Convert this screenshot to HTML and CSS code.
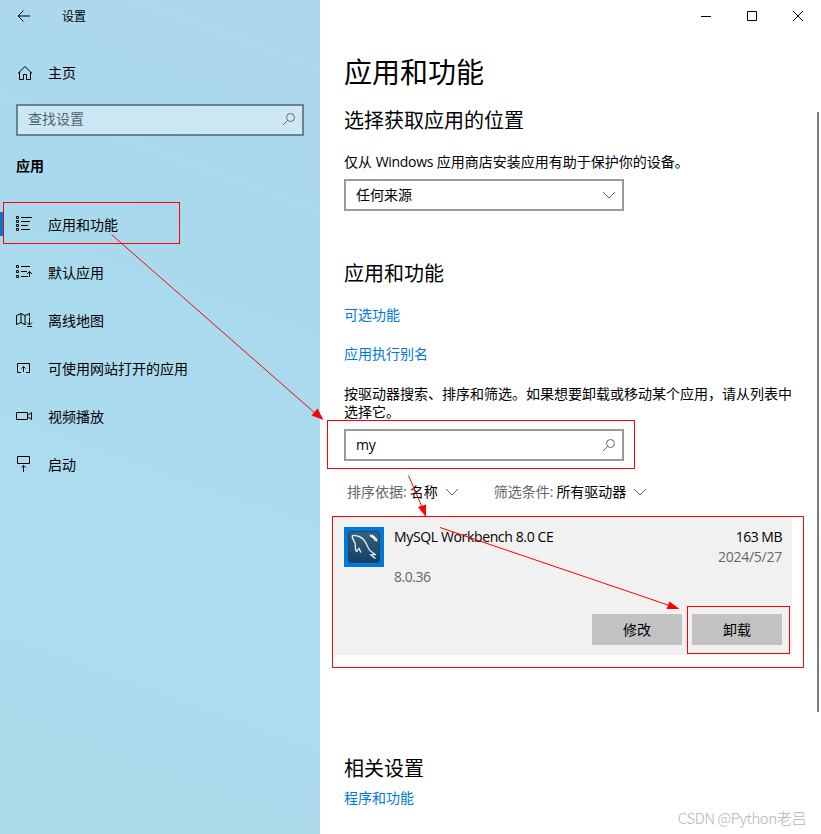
FILE: index.html
```
<!DOCTYPE html>
<html lang="zh-CN">
<head>
  <meta charset="UTF-8">
  <meta name="viewport" content="width=device-width, initial-scale=1.0">
  <title>设置</title>
  <link rel="stylesheet" href="styles.css">
</head>
<body>
  <div class="window">
    <aside class="sidebar">
      <div class="title-row">
        <svg class="back" width="14" height="14" viewBox="0 0 14 14"><path d="M6.500 1.500 1 7l5.500 5.500M1 7h12"/></svg>
        <span>设置</span>
      </div>
      <a class="home">
        <svg width="16" height="16" viewBox="0 0 16 16"><path d="M1 8.300 8 1.500l7 6.800M2.500 7v7.500h4V9.500h3v5h4V7"/></svg>
        <span>主页</span>
      </a>
      <div class="search side-search">
        <span>查找设置</span>
        <svg width="14" height="14" viewBox="0 0 14 14"><circle cx="8.500" cy="5.500" r="4"/><path d="M5.600 8.400 1 13"/></svg>
      </div>
      <div class="group-title">应用</div>
      <nav class="nav">
        <a class="nav-item active">
          <svg width="18" height="18" viewBox="0 0 18 18"><path d="M1.500 1.500h2v2h-2zM1.500 5.500h2v2h-2zM1.500 9.500h2v2h-2zM1.500 13.500h2v2h-2zM6 2.500h11M6 6.500h9M6 10.500h7M6 14.500h9"/></svg>
          <span>应用和功能</span>
        </a>
        <a class="nav-item">
          <svg width="18" height="18" viewBox="0 0 18 18"><path d="M1.500 2.500h2v2h-2zM1.500 7.500h2v2h-2zM1.500 12.500h2v2h-2zM6 3.500h9M6 8.500h6M6 13.500h7M14.500 14V8.500M12 11l2.500-2.500L17 11"/></svg>
          <span>默认应用</span>
        </a>
        <a class="nav-item">
          <svg width="18" height="18" viewBox="0 0 18 18"><path d="M11 13.500 9.500 13.500l-3.500-2-4.500 2v-9l4.500-2 4 2 4.500-2v3M6 2.500v9M10 4.500v9M14.500 6.500v7.500M12 11.500l2.500 2.500L17 11.500M12 15.500h5"/></svg>
          <span>离线地图</span>
        </a>
        <a class="nav-item">
          <svg width="18" height="18" viewBox="0 0 18 18"><path d="M6 13.500H2.500v-9h12v9H11M8.500 13V7.500M6.500 9.500l2-2 2 2"/></svg>
          <span>可使用网站打开的应用</span>
        </a>
        <a class="nav-item">
          <svg width="18" height="18" viewBox="0 0 18 18"><path d="M1.500 5.500h11v7h-11zM13 8l3.500-2.500v7L13 10"/></svg>
          <span>视频播放</span>
        </a>
        <a class="nav-item">
          <svg width="18" height="18" viewBox="0 0 18 18"><path d="M2.500 1.500h12v7h-12zM8.500 17v-6.500M6.500 12.500l2-2 2 2"/></svg>
          <span>启动</span>
        </a>
      </nav>
    </aside>

    <main class="main">
      <div class="controls">
        <svg width="12" height="12" viewBox="0 0 12 12"><path d="M1 6.500h10"/></svg>
        <svg width="12" height="12" viewBox="0 0 12 12"><path d="M1.500 1.500h9v9h-9z"/></svg>
        <svg width="12" height="12" viewBox="0 0 12 12"><path d="M1 1l10 10M11 1 1 11"/></svg>
      </div>

      <h1>应用和功能</h1>
      <h2 class="source-title">选择获取应用的位置</h2>
      <p class="source-text">仅从 <span class="latin">Windows</span> 应用商店安装应用有助于保护你的设备。</p>
      <div class="select">
        <span>任何来源</span>
        <svg width="14" height="8" viewBox="0 0 14 8"><path d="M1 1l6 6 6-6"/></svg>
      </div>

      <h2 class="apps-title">应用和功能</h2>
      <a class="link">可选功能</a>
      <a class="link alias">应用执行别名</a>
      <p class="hint">按驱动器搜索、排序和筛选。如果想要卸载或移动某个应用，请从列表中选择它。</p>
      <div class="search app-search">
        <span class="latin">my</span>
        <svg width="14" height="14" viewBox="0 0 14 14"><circle cx="8.500" cy="5.500" r="4"/><path d="M5.600 8.400 1 13"/></svg>
      </div>

      <div class="filters">
        <div class="filter">
          <span class="filter-label">排序依据:</span>
          <span>名称</span>
          <svg width="14" height="8" viewBox="0 0 14 8"><path d="M1 1l6 6 6-6"/></svg>
        </div>
        <div class="filter">
          <span class="filter-label">筛选条件:</span>
          <span>所有驱动器</span>
          <svg width="14" height="8" viewBox="0 0 14 8"><path d="M1 1l6 6 6-6"/></svg>
        </div>
      </div>

      <section class="app-card">
        <div class="app-head">
          <div class="app-icon">
            <svg width="32" height="32" viewBox="0 0 32 32">
              <defs>
                <linearGradient id="tile" x1="0" y1="0" x2="0" y2="1">
                  <stop offset="0" stop-color="#36617f"/>
                  <stop offset="1" stop-color="#143f62"/>
                </linearGradient>
              </defs>
              <rect class="tile" x="0.500" y="0.500" width="31" height="31" rx="3" fill="url(#tile)"/>
              <path class="dolphin" d="M13 21.500 11 17.500 8.500 20.500C6.500 18.500 8 15 7 12 6 9.500 3.500 7 4.500 4.800 6 3.500 8.500 5 11 5.500c5 1.500 7 6.500 9.500 12 1.500 3 4 3.500 6.500 6l-4 .5 4.500 3.500"/>
              <path class="wrench" d="M23.500 4.500 27.500 8"/>
              <path class="wrench-end" d="M22 3.500l1 2 2-.500M26.500 9l2 .500v-2"/>
            </svg>
          </div>
          <div class="app-info">
            <div class="app-name">MySQL Workbench 8.0 CE</div>
            <div class="app-version">8.0.36</div>
          </div>
          <div class="app-meta">
            <div class="app-size">163 MB</div>
            <div class="app-date">2024/5/27</div>
          </div>
        </div>
        <div class="app-actions">
          <button class="btn">修改</button>
          <button class="btn">卸载</button>
        </div>
      </section>

      <h2 class="related-title">相关设置</h2>
      <a class="link programs">程序和功能</a>
    </main>

    <div class="scrollbar"></div>

    <!-- red step boxes and arrows drawn over the window -->
    <svg class="marks" width="821" height="834" viewBox="0 0 821 834">
      <g class="boxes">
        <rect x="3.500" y="202.500" width="176" height="41"/>
        <rect x="327.500" y="420.500" width="307" height="48"/>
        <rect x="332.500" y="516.500" width="471" height="151"/>
        <rect x="687.500" y="606.500" width="102" height="47"/>
      </g>
      <g class="arrows">
        <path d="M111.500 234.500 316 414M408.500 475.500 422 507M440 527.500 668 605"/>
      </g>
      <g class="heads">
        <path d="M323.500 420 311.500 415.500 317.500 408.500z"/>
        <path d="M426 517 418 507 426 504.500z"/>
        <path d="M679.500 609 666.500 609 669.500 601.500z"/>
      </g>
    </svg>

    <div class="watermark">CSDN @Python老吕</div>
  </div>
</body>
</html>
```
FILE: styles.css
```
* {
  box-sizing: border-box;
}

body {
  margin: 0;
  font-family: "Open Sans", "Noto Sans CJK SC", sans-serif;
  font-size: 14px;
  line-height: 18px;
  color: #000;
}

svg {
  fill: none;
  stroke: #000;
  stroke-width: 1;
  flex: none;
}

h1,
h2,
p {
  margin: 0;
  font-weight: 400;
}

.latin {
  letter-spacing: -0.3px;
}

.window {
  position: relative;
  display: flex;
  width: 821px;
  height: 834px;
  overflow: hidden;
  background: #fff;
}

/* sidebar */
.sidebar {
  width: 320px;
  background: linear-gradient(200deg, #afd7ec 0%, #a9d9ed 30%, #addcf0 65%, #acdaea 100%);
}

.title-row {
  display: flex;
  align-items: center;
  gap: 31px;
  height: 32px;
  padding-left: 17px;
  font-size: 12px;
}

.title-row span {
  padding-top: 2px;
}

.home {
  display: flex;
  align-items: center;
  gap: 15px;
  height: 48px;
  margin-top: 17px;
  padding-left: 17px;
}

.search,
.select {
  display: flex;
  align-items: center;
  justify-content: space-between;
  height: 32px;
  border: 2px solid #999;
  padding: 0 6px 1px 10px;
}

.search svg,
.select svg,
.filter svg {
  stroke: #666;
}

.side-search {
  width: 288px;
  margin: 7px 0 0 16px;
  padding-bottom: 2px;
  border-color: #688391;
  background: rgba(255, 255, 255, 0.4);
  color: #51646e;
}

.group-title {
  margin: 21px 0 0 16px;
  font-weight: 700;
}

.nav {
  margin-top: 26px;
}

.nav-item {
  display: flex;
  align-items: center;
  gap: 15px;
  height: 48px;
  padding-left: 15px;
}

.nav-item svg {
  margin-bottom: 2px;
}

.nav-item.active {
  background: linear-gradient(#0078d7, #0078d7) 0 11px / 4px 24px no-repeat;
}

/* main column */
.main {
  width: 501px;
  padding-left: 24px;
}

.controls {
  display: flex;
  justify-content: flex-end;
  align-items: center;
  gap: 34px;
  height: 32px;
  padding-right: 17px;
}

h1 {
  margin-top: 20px;
  font-size: 28px;
  line-height: 40px;
}

h2 {
  font-size: 20px;
  line-height: 28px;
}

.source-title {
  margin-top: 15px;
}

.source-text {
  margin-top: 18px;
}

.select {
  width: 280px;
  margin-top: 8px;
  padding-bottom: 0;
}

.apps-title {
  margin-top: 49px;
}

.link {
  display: block;
  margin-top: 18px;
  color: #0078d7;
}

.link.alias {
  margin-top: 21px;
}

.hint {
  width: 450px;
  margin-top: 22px;
}

.app-search {
  width: 280px;
  margin-top: 8px;
}

.filters {
  display: flex;
  gap: 35px;
  height: 20px;
  margin-top: 21px;
  padding-left: 3px;
}

.filter {
  display: flex;
  align-items: center;
  gap: 3px;
}

.filter svg {
  margin-left: 4px;
}

.filter-label {
  color: #666;
}

.app-card {
  width: 458px;
  height: 138px;
  margin: 15px 0 0 -10px;
  padding: 10px;
  background: #f1f1f1;
}

.app-head {
  display: flex;
  height: 87px;
}

.app-icon {
  display: flex;
  align-items: center;
  justify-content: center;
  width: 40px;
  height: 40px;
  background: #0078d7;
}

.tile {
  stroke: #1c4465;
}

.dolphin {
  stroke: #e4edf3;
  stroke-width: 1.4;
}

.wrench {
  stroke: #fff;
  stroke-width: 2.4;
}

.wrench-end {
  stroke: #fff;
  stroke-width: 1.4;
}

.app-info {
  flex: 1;
  padding-left: 10px;
  line-height: 20px;
}

.app-name {
  letter-spacing: -0.36px;
}

.app-version {
  margin-top: 20px;
  color: #666;
  letter-spacing: -0.45px;
}

.app-meta {
  line-height: 20px;
  text-align: right;
}

.app-size {
  letter-spacing: -0.5px;
}

.app-date {
  color: #666;
  letter-spacing: -0.25px;
}

.app-actions {
  display: flex;
  justify-content: flex-end;
  gap: 10px;
}

.btn {
  width: 90px;
  height: 31px;
  border: none;
  padding: 0;
  background: #c2c2c2;
  color: #000;
  font: inherit;
}

.related-title {
  margin-top: 100px;
}

.link.programs {
  margin-top: 6px;
}

/* overlays */
.scrollbar {
  position: absolute;
  top: 112px;
  right: 2px;
  width: 2px;
  height: 600px;
  background: #7a7a7a;
}

.marks {
  position: absolute;
  top: 0;
  left: 0;
}

.boxes,
.arrows {
  stroke: #f00;
}

.heads {
  fill: #f00;
  stroke: none;
}

.watermark {
  position: absolute;
  right: 15px;
  bottom: 6px;
  color: #b4b4b4;
  font-family: "Noto Sans CJK SC", sans-serif;
  font-size: 15px;
  font-weight: 300;
  line-height: 20px;
  letter-spacing: -0.4px;
}
```
